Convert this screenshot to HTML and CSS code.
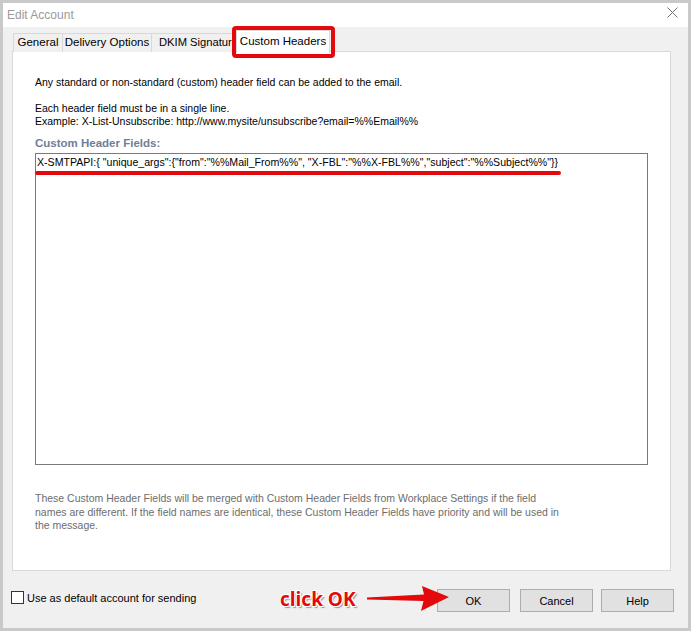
FILE: index.html
```html
<!DOCTYPE html>
<html lang="en">

<head>
  <meta charset="UTF-8">
  <meta name="viewport" content="width=device-width, initial-scale=1.0">
  <title>Edit Account</title>
  <link rel="stylesheet" href="styles.css">
</head>

<body>
  <div class="window">
    <div class="titlebar">
      <span class="caption">Edit Account</span>
      <svg class="close" width="11" height="11" viewBox="0 0 11 11">
        <path d="M0.5 0.5 L10.5 10.5 M10.5 0.5 L0.5 10.5" stroke="#6f6f6f" stroke-width="1" fill="none"/>
      </svg>
    </div>
    <div class="body">
      <div class="tabs">
        <span class="tab general">General</span>
        <span class="tab delivery">Delivery Options</span>
        <span class="tab dkim">DKIM Signature</span>
        <span class="tab active">Custom Headers</span>
      </div>
      <div class="panel">
        <p class="note">Any standard or non-standard (custom) header field can be added to the email.</p>
        <p class="note gap">Each header field must be in a single line.<br>Example: X-List-Unsubscribe: http://www.mysite/unsubscribe?email=%%Email%%</p>
        <p class="label">Custom Header Fields:</p>
        <div class="field">
          <textarea class="headers" spellcheck="false">X-SMTPAPI:{ "unique_args":{"from":"%%Mail_From%%", "X-FBL":"%%X-FBL%%","subject":"%%Subject%%"}}</textarea>
          <i class="underline"></i>
        </div>
        <p class="note info">These Custom Header Fields will be merged with Custom Header Fields from Workplace Settings if the field names are different. If the field names are identical, these Custom Header Fields have priority and will be used in the message.</p>
      </div>
      <div class="footer">
        <label class="check"><i class="box"></i>Use as default account for sending</label>
        <div class="buttons">
          <button class="btn">OK</button>
          <button class="btn">Cancel</button>
          <button class="btn">Help</button>
        </div>
        <div class="callout">
          <span class="hint">click OK</span>
          <svg width="84" height="28" viewBox="0 0 84 28">
            <path d="M1 12.5 L58 9.5 L56 1 L83 12 L55 26 L57.5 16 L1 14.5 Z" fill="#e3090c"/>
          </svg>
        </div>
      </div>
    </div>
  </div>
</body>

</html>
```

FILE: styles.css
```css
*, *::before, *::after {
  box-sizing: border-box;
}

body {
  margin: 0;
  background: #c9c9c9;
  font-family: "Liberation Sans", Arial, sans-serif;
  font-size: 10.5px;
  color: #000;
}

.window {
  width: 691px;
  height: 631px;
  padding: 3px;
  background: #c9c9c9;
  display: flex;
  flex-direction: column;
}

.titlebar {
  height: 24px;
  background: #fff;
  display: flex;
  align-items: center;
  justify-content: space-between;
  padding: 0 10px 0 4px;
}

.caption {
  color: #9a9a9a;
  font-size: 12px;
  margin-top: -1px;
}

.close {
  margin-top: -6px;
}

.body {
  flex: 1;
  background: #f0f0f0;
  padding: 6px 15px 0 9px;
  display: flex;
  flex-direction: column;
}

.tabs {
  display: flex;
  height: 19px;
  padding-left: 1px;
  position: relative;
  z-index: 1;
}

.tab {
  border: 1px solid #d9d9d9;
  border-bottom: none;
  background: #f0f0f0;
  font-size: 11.5px;
  padding-top: 2px;
  margin-right: -1px;
  white-space: nowrap;
  text-align: center;
}

.general {
  width: 50px;
}

.delivery {
  width: 90px;
}

.dkim {
  width: 86px;
  text-align: left;
  padding-left: 7px;
  font-size: 11.2px;
}

.tab.active {
  width: 94px;
  background: #fff;
  margin-top: -3px;
  height: 23px;
  padding-top: 4px;
  position: relative;
  z-index: 1;
}

.tab.active::after {
  content: "";
  position: absolute;
  left: -5px;
  top: -5px;
  width: 103px;
  height: 32px;
  border: 4px solid #e3090c;
  border-radius: 4px;
}

.panel {
  height: 520px;
  margin: -1px 2px 0 0;
  background: #fff;
  border: 1px solid #d9d9d9;
  padding: 24px 23px 0 22px;
}

.panel p {
  margin: 0;
}

.note {
  line-height: 13px;
}

.gap {
  margin-top: 13px !important;
}

.label {
  margin-top: 9px !important;
  color: #6f7e97;
  font-weight: bold;
  font-size: 11.5px;
  line-height: 13px;
}

.field {
  position: relative;
  margin-top: 3px;
}

.headers {
  display: block;
  width: 613px;
  height: 312px;
  border: 1px solid #7a7a7a;
  resize: none;
  outline: none;
  font-family: "Liberation Sans", Arial, sans-serif;
  font-size: 10.6px;
  padding: 2px 1px;
  margin: 0;
}

.underline {
  position: absolute;
  left: 0;
  top: 18px;
  width: 526px;
  height: 4px;
  background: #e3090c;
  border-radius: 2px;
}

.info {
  margin-top: 27px !important;
  width: 530px;
  color: #6d6d6d;
  line-height: 13.5px;
}

.footer {
  position: relative;
  display: flex;
  align-items: center;
  justify-content: space-between;
  padding: 18px 0 0 0;
}

.check {
  display: flex;
  align-items: center;
  gap: 3px;
  margin: -6px 0 0 -1px;
  font-size: 11px;
}

.box {
  width: 13px;
  height: 13px;
  border: 1px solid #333;
  background: #fff;
}

.buttons {
  display: flex;
  gap: 10px;
  margin-right: -1px;
}

.btn {
  width: 73px;
  height: 23px;
  background: #e1e1e1;
  border: 1px solid #adadad;
  font-family: "Liberation Sans", Arial, sans-serif;
  font-size: 11px;
  padding: 0;
}

.btn + .btn + .btn {
  margin-left: -2px;
}

.callout {
  position: absolute;
  left: 268px;
  top: 14px;
  display: flex;
  align-items: center;
  gap: 10px;
}

.hint {
  color: #e3090c;
  font-weight: bold;
  font-size: 19px;
  font-family: "Open Sans", "Liberation Sans", sans-serif;
  text-shadow: -1px -1px 0 #fff, 1px -1px 0 #fff, -1px 1px 0 #fff, 1px 1px 0 #fff, 2px 2px 1px #999;
}
```
